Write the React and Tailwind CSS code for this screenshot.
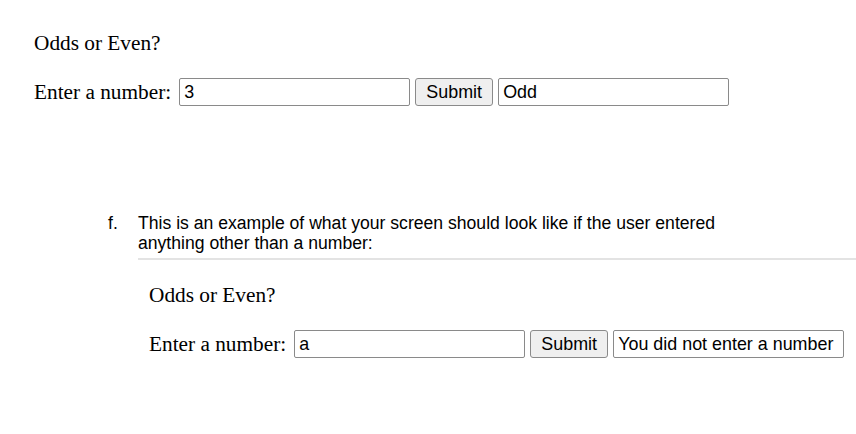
export default function App() {
  const inputCls =
    "h-[28px] w-[231px] border border-[#8a8a8a] rounded-[2px] bg-white px-[4px] font-['Liberation_Sans',Arial,sans-serif] text-[17.9px] text-black outline-none";
  const btnCls =
    "h-[28px] w-[78px] border border-[#8a8a8a] rounded-[3px] bg-[#efefef] font-['Liberation_Sans',Arial,sans-serif] text-[17.9px] text-black";
  const Form = ({ value, result }) => (
    <div className="flex items-center h-[28px]">
      <span className="leading-[24px]">Enter a number:</span>
      <input className={inputCls + " ml-[8px]"} defaultValue={value} />
      <button className={btnCls + " ml-[5px]"}>Submit</button>
      <input className={inputCls + " ml-[5px]"} defaultValue={result} />
    </div>
  );
  return (
    <div className="w-[856px] h-[434px] overflow-hidden bg-white text-black font-['Liberation_Serif','Times_New_Roman',serif] text-[21.3px]">
      <div className="pt-[31px] pl-[34px]">
        <p className="leading-[24px]">Odds or Even?</p>
        <div className="mt-[22px] pt-[1px]">
          <Form value="3" result="Odd" />
        </div>
      </div>
      <div className="mt-[107px] flex pl-[108px] font-['Liberation_Sans',Arial,sans-serif] text-[17.6px] leading-[20px]">
        <span className="w-[30px] shrink-0">f.</span>
        <div className="flex-1">
          <p className="w-[600px]">
            This is an example of what your screen should look like if the user entered anything other than a number:
          </p>
          <div className="mt-[5px] h-[2px] bg-[#e3e3e3]" />
          <div className="pl-[11px] pt-[23px] font-['Liberation_Serif','Times_New_Roman',serif] text-[21.3px]">
            <p className="leading-[24px]">Odds or Even?</p>
            <div className="mt-[23px]">
              <Form value="a" result="You did not enter a number" />
            </div>
          </div>
        </div>
      </div>
    </div>
  );
}
